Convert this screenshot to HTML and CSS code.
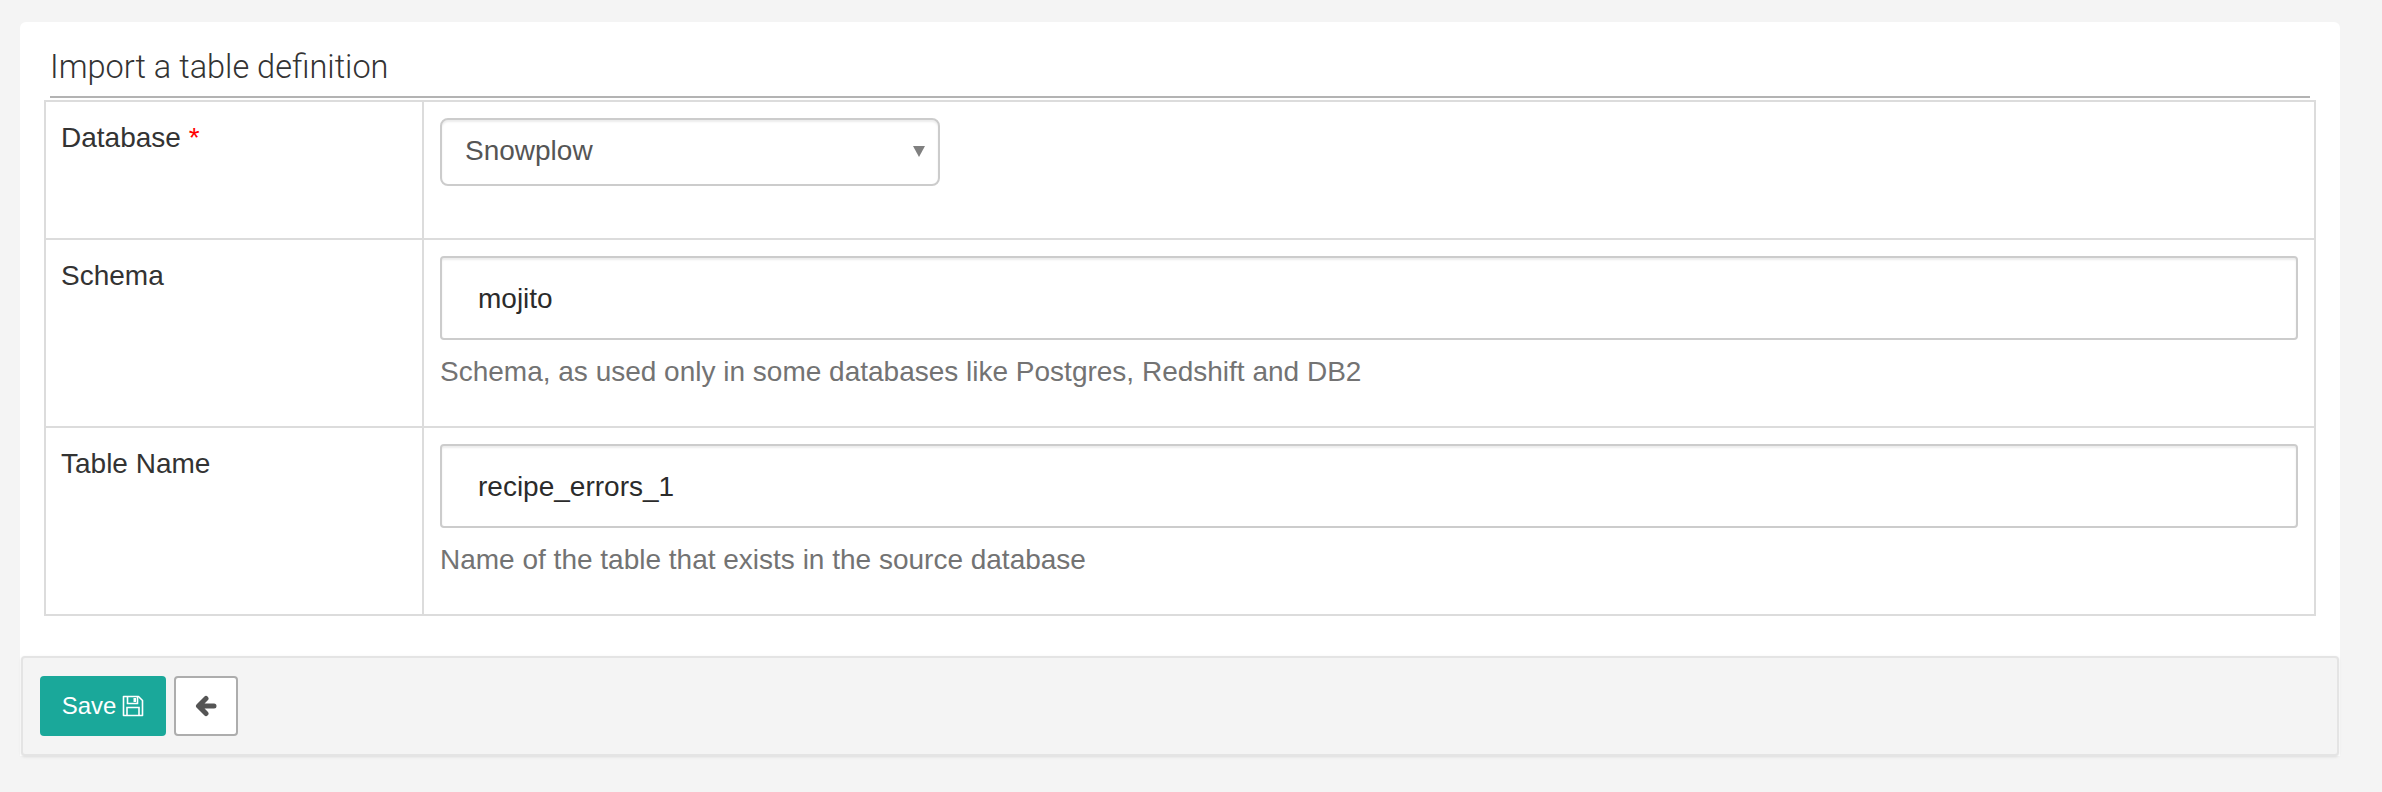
FILE: index.html
```html
<!DOCTYPE html>
<html lang="en">
<head>
<meta charset="utf-8">
<title>Import a table definition</title>
<link rel="stylesheet" href="styles.css">
</head>
<body>
<main class="card">
  <div class="body">
    <h2 class="title">Import a table definition</h2>
    <table class="form-table">
      <tr class="row-db">
        <th>Database <span class="req">*</span></th>
        <td>
          <div class="select-wrap">
            <select class="select"><option>Snowplow</option></select>
          </div>
        </td>
      </tr>
      <tr class="row-field">
        <th>Schema</th>
        <td>
          <input class="input" type="text" value="mojito">
          <p class="help">Schema, as used only in some databases like Postgres, Redshift and DB2</p>
        </td>
      </tr>
      <tr class="row-field">
        <th>Table Name</th>
        <td>
          <input class="input" type="text" value="recipe_errors_1">
          <p class="help">Name of the table that exists in the source database</p>
        </td>
      </tr>
    </table>
  </div>
  <footer class="footer">
    <button class="btn btn-save" type="button">Save
      <svg class="icon-save" viewBox="0 0 22 22" width="22" height="22" aria-hidden="true">
        <path d="M1.5 1.5H16.5L20.5 5.5V20.5H1.5Z" fill="none" stroke="currentColor" stroke-width="1.6" stroke-linejoin="round"/>
        <path d="M5.5 1.5V8.5H15.5V1.5" fill="none" stroke="currentColor" stroke-width="1.6"/>
        <path d="M11.5 3H14V7H11.5Z" fill="currentColor"/>
        <path d="M5 20.5V12.5H17V20.5" fill="none" stroke="currentColor" stroke-width="1.6"/>
      </svg>
    </button>
    <button class="btn btn-back" type="button" aria-label="Back">
      <svg viewBox="0 0 22 22" width="22" height="22" aria-hidden="true">
        <path d="M19 11H4.5M11 3.5L3.5 11L11 18.5" fill="none" stroke="#555" stroke-width="5" stroke-linecap="round" stroke-linejoin="round"/>
      </svg>
    </button>
  </footer>
</main>
</body>
</html>
```
FILE: styles.css
```css
* { box-sizing: border-box; }
html, body { margin: 0; height: 100%; }
body {
  background: #f4f4f4;
  padding: 22px 42px 0 20px;
  font-family: "Liberation Sans", Arial, sans-serif;
  font-size: 28px;
  color: #333;
  overflow: hidden;
}
.card {
  background: #fff;
  border-radius: 6px 6px 0 0;
  display: flex;
  flex-direction: column;
}
.body { padding: 0 24px 40px; }
.title {
  margin: 0 6px;
  height: 76px;
  padding-top: 27px;
  border-bottom: 2px solid #b3b3b3;
  font-family: Roboto, "Liberation Sans", sans-serif;
  font-weight: 300;
  font-size: 32.5px;
  line-height: 36px;
  color: #333;
}
.form-table {
  width: 100%;
  margin-top: 2px;
  border-collapse: collapse;
  table-layout: fixed;
}
.form-table th, .form-table td {
  border: 2px solid #dcdcdc;
  vertical-align: top;
  text-align: left;
  padding: 16px;
}
.form-table th {
  width: 378px;
  font-weight: 400;
  line-height: 38px;
  padding: 17px 15px 16px;
}
.row-db { height: 138px; }
.row-field { height: 188px; }
.req { color: #f00; }
.select-wrap {
  position: relative;
  width: 500px;
}
.select-wrap::after {
  content: "";
  position: absolute;
  top: 28px;
  right: 15px;
  border-left: 6px solid transparent;
  border-right: 6px solid transparent;
  border-top: 11px solid #808080;
}
.select {
  display: block;
  width: 100%;
  height: 68px;
  padding: 0 23px 4px;
  appearance: none;
  background: #fff;
  border: 2px solid #ccc;
  border-radius: 8px;
  box-shadow: inset 0 2px 2px rgba(0, 0, 0, .075);
  font: inherit;
  color: #555;
}
.input {
  display: block;
  width: 100%;
  height: 84px;
  padding: 2px 36px 0;
  background: #fff;
  border: 2px solid #ccc;
  border-radius: 4px;
  box-shadow: inset 0 2px 2px rgba(0, 0, 0, .075);
  font: inherit;
  color: #2b2b2b;
}
.help {
  margin: 13px 0 0;
  line-height: 38px;
  color: #737373;
}
.footer {
  display: flex;
  gap: 8px;
  align-items: center;
  height: 100px;
  margin: 0 1px;
  padding: 0 17px;
  background: #f4f4f4;
  border: 2px solid #e4e4e4;
  border-radius: 4px;
  box-shadow: 0 1px 3px rgba(0, 0, 0, .1);
}
.btn {
  height: 60px;
  border-radius: 4px;
  font: inherit;
  font-size: 24px;
  display: inline-flex;
  align-items: center;
  justify-content: center;
  gap: 6px;
  padding: 0;
}
.btn-save {
  width: 126px;
  background: #1aa89a;
  border: none;
  color: #fff;
}
.btn-back {
  width: 64px;
  background: #fff;
  border: 2px solid #adadad;
}
```
